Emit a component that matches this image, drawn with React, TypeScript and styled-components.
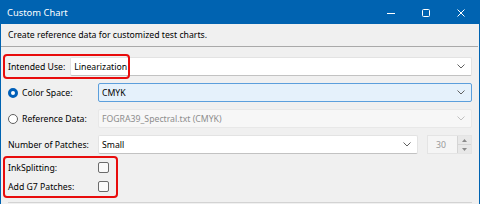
import React from 'react'
import styled, { createGlobalStyle, css } from 'styled-components'

const GlobalStyle = createGlobalStyle`
    html, body {
        margin: 0;
        padding: 0;
        background: #f0f0f0;
    }
    body {
        font-family: "Noto Sans", "Open Sans", sans-serif;
        font-size: 8.7px;
        color: #000;
    }
`

const Window = styled.div`
    width: 480px;
    height: 204px;
    box-sizing: border-box;
    border: 1px solid #0063b1;
    border-bottom: none;
    background: #f0f0f0;
    display: flex;
    flex-direction: column;
    overflow: hidden;
`

const TitleBar = styled.div`
    height: 23px;
    background: #0063b1;
    color: #fff;
    display: flex;
    align-items: center;
    padding-left: 6px;
`

const Title = styled.div`
    flex: 1;
    font-size: 9.4px;
`

const Controls = styled.div`
    display: flex;
    height: 100%;
    margin-right: 1px;
`

const ControlButton = styled.div`
    width: 35px;
    height: 100%;
    display: flex;
    align-items: center;
    justify-content: center;
`

const Body = styled.div`
    flex: 1;
    padding: 0 7px 0 7px;
    display: flex;
    flex-direction: column;
`

const Intro = styled.div`
    height: 22px;
    line-height: 22px;
`

const Separator = styled.div`
    height: 1px;
    background: #a9a9a9;
    margin: 0 -6px 0 -7px;
`

const Form = styled.div`
    display: grid;
    grid-template-columns: 90px 1fr;
    row-gap: 7px;
    align-items: center;
    margin-top: 10px;
`

const Label = styled.div`
    display: flex;
    align-items: center;
    gap: 4px;
    white-space: nowrap;
`

const UseRow = styled.div`
    grid-column: 1 / 3;
    position: relative;
    display: flex;
    align-items: center;
    gap: 5px;
`

const Highlight = styled.div`
    position: absolute;
    left: -5px;
    top: -3px;
    width: 127px;
    height: 25px;
    box-sizing: border-box;
    border: 2px solid #e80c0c;
    border-radius: 4px;
    pointer-events: none;
`

const Combo = styled.div<{ $state?: 'normal' | 'focus' | 'disabled' }>`
    flex: 1;
    height: 19px;
    box-sizing: border-box;
    display: flex;
    align-items: center;
    padding: 0 6px 0 3px;
    background: #fff;
    border: 1px solid #e3e3e3;
    border-bottom-color: #c2c2c2;
    border-radius: 2px;
    color: #000;
    ${(p) => p.$state === 'focus' && css`
        background: #e5f1fb;
        border-color: #5c9fdc;
    `}
    ${(p) => p.$state === 'disabled' && css`
        background: #f7f7f7;
        border-color: #e8e8e8;
        color: #8d8d8d;
    `}
`

const ComboText = styled.span`
    flex: 1;
    white-space: nowrap;
`

const PatchRow = styled.div`
    display: flex;
    align-items: center;
    gap: 9px;
`

const Spinner = styled.div`
    width: 45px;
    height: 19px;
    box-sizing: border-box;
    display: flex;
    background: #f5f5f5;
    border: 1px solid #e4e4e4;
    color: #9a9a9a;
`

const SpinValue = styled.div`
    flex: 1;
    display: flex;
    align-items: center;
    padding-left: 8px;
`

const SpinButtons = styled.div`
    width: 13px;
    display: flex;
    flex-direction: column;
    border-left: 1px solid #d5d5d5;
`

const SpinButton = styled.div`
    flex: 1;
    display: flex;
    align-items: center;
    justify-content: center;
    background: #e8e8e8;
    & + & {
        border-top: 1px solid #d5d5d5;
    }
`

const Radio = styled.span<{ $checked?: boolean }>`
    width: 10px;
    height: 10px;
    box-sizing: border-box;
    border-radius: 50%;
    display: inline-flex;
    border: 1px solid #5f5f5f;
    background: #fff;
    ${(p) => p.$checked && css`
        border: 3px solid #005fb8;
    `}
`

const CheckGroup = styled.div`
    margin: 2px 0 0 -5px;
    width: 115px;
    box-sizing: border-box;
    border: 2px solid #e80c0c;
    border-radius: 4px;
    padding: 0 0 0 3px;
    display: grid;
    grid-template-columns: 90px 11px;
    grid-auto-rows: 19px;
    align-items: center;
`

const Checkbox = styled.span`
    width: 11px;
    height: 11px;
    box-sizing: border-box;
    border: 1px solid #6b6b6b;
    border-radius: 2px;
    background: #fafafa;
`

const BottomLine = styled.div`
    height: 1px;
    background: #d3d3d3;
    margin-top: 4px;
`

const Chevron: React.FC<{ color?: string }> = ({ color = '#606060' }) => (
    <svg width="8" height="5" viewBox="0 0 8 5">
        <path d="M0.5 0.5 L4 4 L7.5 0.5" fill="none" stroke={color} strokeWidth="1" />
    </svg>
)

const App: React.FC = () => {
    return (
        <Window>
            <GlobalStyle />
            <TitleBar>
                <Title>Custom Chart</Title>
                <Controls>
                    <ControlButton>
                        <svg width="10" height="10" viewBox="0 0 10 10">
                            <path d="M1 5.5 H9" stroke="#fff" strokeWidth="1" />
                        </svg>
                    </ControlButton>
                    <ControlButton>
                        <svg width="10" height="10" viewBox="0 0 10 10">
                            <rect x="1.5" y="1.5" width="7" height="7" rx="1" fill="none" stroke="#fff" strokeWidth="1" />
                        </svg>
                    </ControlButton>
                    <ControlButton>
                        <svg width="10" height="10" viewBox="0 0 10 10">
                            <path d="M1.5 1.5 L8.5 8.5 M8.5 1.5 L1.5 8.5" stroke="#fff" strokeWidth="1" />
                        </svg>
                    </ControlButton>
                </Controls>
            </TitleBar>
            <Body>
                <Intro>Create reference data for customized test charts.</Intro>
                <Separator />
                <Form>
                    <UseRow>
                        <Highlight />
                        <Label>Intended Use:</Label>
                        <Combo>
                            <ComboText>Linearization</ComboText>
                            <Chevron />
                        </Combo>
                    </UseRow>

                    <Label><Radio $checked />Color Space:</Label>
                    <Combo $state="focus">
                        <ComboText>CMYK</ComboText>
                        <Chevron />
                    </Combo>

                    <Label><Radio />Reference Data:</Label>
                    <Combo $state="disabled">
                        <ComboText>FOGRA39_Spectral.txt (CMYK)</ComboText>
                        <Chevron color="#c0c0c0" />
                    </Combo>

                    <Label>Number of Patches:</Label>
                    <PatchRow>
                        <Combo>
                            <ComboText>Small</ComboText>
                            <Chevron />
                        </Combo>
                        <Spinner>
                            <SpinValue>30</SpinValue>
                            <SpinButtons>
                                <SpinButton>
                                    <svg width="5" height="3" viewBox="0 0 5 3"><path d="M0 3 L2.5 0 L5 3 Z" fill="#8a8a8a" /></svg>
                                </SpinButton>
                                <SpinButton>
                                    <svg width="5" height="3" viewBox="0 0 5 3"><path d="M0 0 L2.5 3 L5 0 Z" fill="#8a8a8a" /></svg>
                                </SpinButton>
                            </SpinButtons>
                        </Spinner>
                    </PatchRow>
                </Form>
                <CheckGroup>
                    <Label>InkSplitting:</Label>
                    <Checkbox />
                    <Label>Add G7 Patches:</Label>
                    <Checkbox />
                </CheckGroup>
                <BottomLine />
            </Body>
        </Window>
    )
}

export default App
